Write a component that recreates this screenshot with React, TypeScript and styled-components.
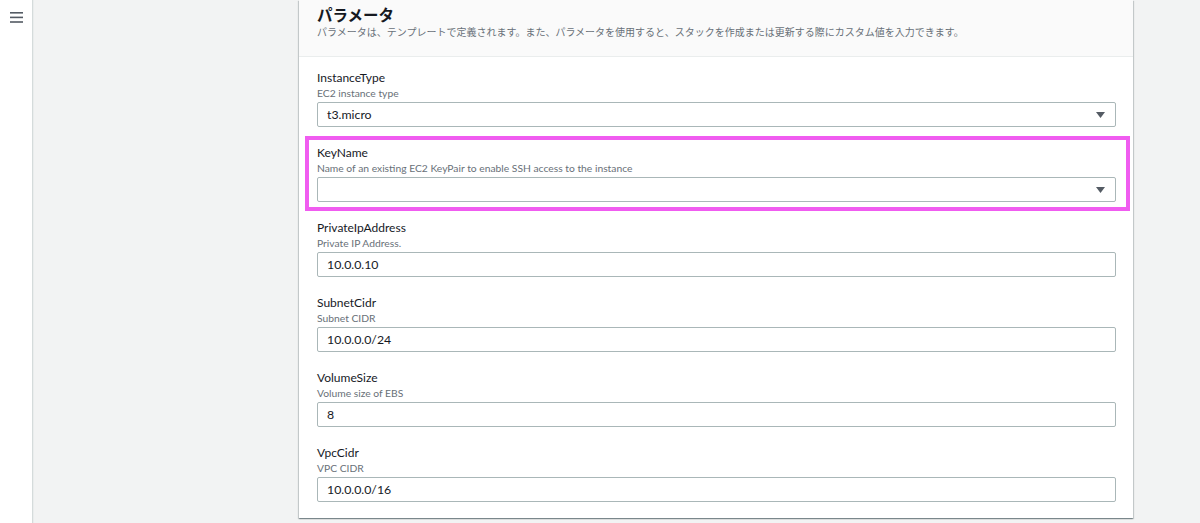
import styled, { createGlobalStyle } from "styled-components";

const GlobalStyle = createGlobalStyle`
  html, body {
    margin: 0;
    padding: 0;
    background: #f2f3f3;
  }

  body {
    font-family: Lato, "Noto Sans CJK JP", sans-serif;
    color: #16191f;
    overflow: hidden;
  }
`;

const Layout = styled.div`
  display: flex;
  height: 523px;
`;

const SideBar = styled.aside`
  width: 33px;
  flex-shrink: 0;
  background: #ffffff;
  border-right: 1px solid #d5dbdb;
  box-shadow: 1px 0 0 #eaeded;
  padding: 7px 0 0 10px;
  box-sizing: border-box;
`;

const Main = styled.main`
  flex: 1;
  padding-left: 266px;
`;

const Card = styled.section`
  width: 834px;
  background: #ffffff;
  box-shadow: 0 1px 1px 0 rgba(0, 28, 36, 0.3), 1px 1px 1px 0 rgba(0, 28, 36, 0.15),
    -1px 1px 1px 0 rgba(0, 28, 36, 0.15);
`;

const CardHeader = styled.header`
  background: #fafafa;
  border-bottom: 1px solid #eaeded;
  padding: 5px 18px 17px;
`;

const Title = styled.h2`
  margin: 0;
  font-size: 15.5px;
  line-height: 20px;
  font-weight: 700;
  color: #16191f;
`;

const HeaderText = styled.p`
  margin: 0;
  font-size: 10px;
  line-height: 14px;
  color: #687078;
`;

const CardBody = styled.div`
  display: flex;
  flex-direction: column;
  gap: 18px;
  padding: 13px 17px 16px 18px;
`;

const Field = styled.div<{ $highlight?: boolean }>`
  position: relative;
  display: flex;
  flex-direction: column;

  ${({ $highlight }) =>
    $highlight &&
    `
    &::after {
      content: "";
      position: absolute;
      top: -9px;
      left: -12px;
      right: -14px;
      bottom: -9px;
      border: 4px solid #f05cf0;
      pointer-events: none;
    }
  `}
`;

const Label = styled.span`
  font-size: 12px;
  line-height: 16px;
  color: #16191f;
`;

const Hint = styled.span`
  font-size: 10.3px;
  line-height: 14px;
  color: #687078;
`;

const InputBox = styled.div`
  margin-top: 2px;
  height: 25px;
  box-sizing: border-box;
  border: 1px solid #aab7b8;
  border-radius: 2px;
  background: #ffffff;
  display: flex;
  align-items: center;
  justify-content: space-between;
  padding: 0 10px 0 9px;
  font-size: 12.3px;
  color: #16191f;
`;

const Caret = () => (
  <svg width="9" height="6" viewBox="0 0 9 6">
    <path d="M0 0 H9 L4.5 6 Z" fill="#545b64" />
  </svg>
);

const Hamburger = () => (
  <svg width="13" height="11" viewBox="0 0 13 11">
    <rect x="0" y="0" width="13" height="1.6" fill="#545b64" />
    <rect x="0" y="4.6" width="13" height="1.6" fill="#545b64" />
    <rect x="0" y="9.2" width="13" height="1.6" fill="#545b64" />
  </svg>
);

interface Param {
  name: string;
  hint: string;
  value: string;
  select?: boolean;
  highlight?: boolean;
}

const params: Param[] = [
  { name: "InstanceType", hint: "EC2 instance type", value: "t3.micro", select: true },
  {
    name: "KeyName",
    hint: "Name of an existing EC2 KeyPair to enable SSH access to the instance",
    value: "",
    select: true,
    highlight: true,
  },
  { name: "PrivateIpAddress", hint: "Private IP Address.", value: "10.0.0.10" },
  { name: "SubnetCidr", hint: "Subnet CIDR", value: "10.0.0.0/24" },
  { name: "VolumeSize", hint: "Volume size of EBS", value: "8" },
  { name: "VpcCidr", hint: "VPC CIDR", value: "10.0.0.0/16" },
];

const App = () => {
  return (
    <>
      <GlobalStyle />
      <Layout>
        <SideBar>
          <Hamburger />
        </SideBar>
        <Main>
          <Card>
            <CardHeader>
              <Title>パラメータ</Title>
              <HeaderText>
                パラメータは、テンプレートで定義されます。また、パラメータを使用すると、スタックを作成または更新する際にカスタム値を入力できます。
              </HeaderText>
            </CardHeader>
            <CardBody>
              {params.map((p) => (
                <Field key={p.name} $highlight={p.highlight}>
                  <Label>{p.name}</Label>
                  <Hint>{p.hint}</Hint>
                  <InputBox>
                    <span>{p.value}</span>
                    {p.select && <Caret />}
                  </InputBox>
                </Field>
              ))}
            </CardBody>
          </Card>
        </Main>
      </Layout>
    </>
  );
};

export default App;
